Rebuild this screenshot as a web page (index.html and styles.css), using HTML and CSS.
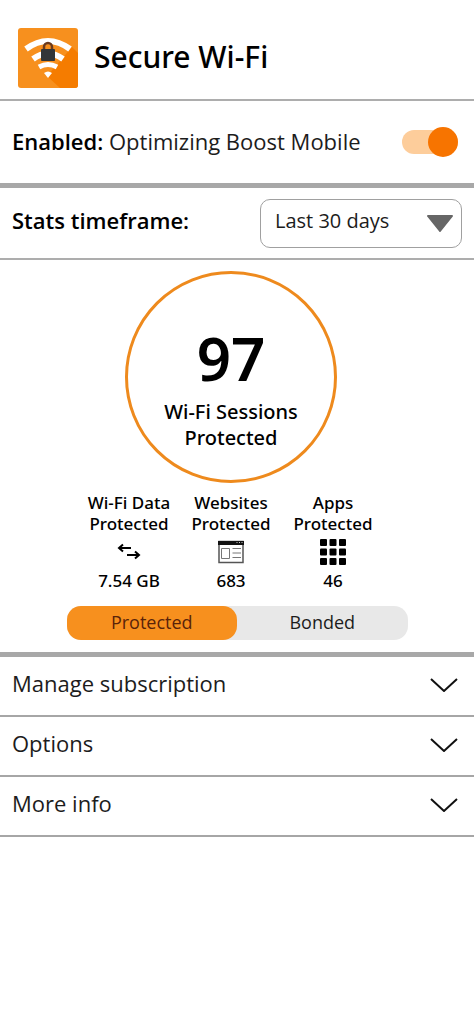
FILE: index.html
```html
<!DOCTYPE html>
<html lang="en">
<head>
<meta charset="utf-8">
<meta name="viewport" content="width=device-width, initial-scale=1">
<title>Secure Wi-Fi</title>
<link rel="stylesheet" href="styles.css">
</head>
<body>
<header class="header">
  <svg class="logo" viewBox="0 0 60 60" aria-hidden="true">
    <rect width="60" height="60" rx="3" fill="#f7901e"/>
    <path d="M54 19 60 25V57a3 3 0 0 1-3 3H42L29 48Z" fill="#f57c00"/>
    <g fill="none" stroke="#fff">
      <path d="M8 21Q30 5 52 21" stroke-width="6"/>
      <path d="M15 31Q30 20 45 31" stroke-width="6"/>
      <path d="M21 39Q30 34 39 39" stroke-width="5"/>
    </g>
    <path d="M26 45Q30 42 34 45L30 50Z" fill="#fff"/>
    <path d="M26 23V19a4 4 0 0 1 8 0V23" fill="none" stroke="#6b3a1c" stroke-width="2.500"/>
    <rect x="23" y="21" width="14" height="12" rx="1" fill="#333638"/>
  </svg>
  <h1 class="title">Secure Wi-Fi</h1>
</header>
<main>
  <section class="row row-enabled">
    <label for="enabled"><strong class="strong">Enabled:</strong> Optimizing Boost Mobile</label>
    <input class="toggle" type="checkbox" role="switch" id="enabled" checked>
  </section>
  <section class="row row-timeframe">
    <label class="strong" for="timeframe">Stats timeframe:</label>
    <span class="select-box">
      <select class="select" id="timeframe"><option>Last 30 days</option></select>
      <svg class="caret" viewBox="0 0 26 17" aria-hidden="true"><path d="M1 1H25L13 16Z" fill="#666" stroke="#666" stroke-width="2" stroke-linejoin="round"/></svg>
    </span>
  </section>
  <section class="stats">
    <div class="ring">
      <span class="ring-value">97</span>
      <span class="ring-label">Wi-Fi Sessions<br>Protected</span>
    </div>
    <div class="metrics">
      <div class="metric">
        <span>Wi-Fi Data<br>Protected</span>
        <svg class="metric-icon" viewBox="0 0 26 26" aria-hidden="true"><g fill="none" stroke="#000" stroke-width="2"><path d="M3 9H15M7 5.500 3 9 7 12.500M11 16H23M19 12.500 23 16 19 19.500"/></g></svg>
        <span>7.54 GB</span>
      </div>
      <div class="metric">
        <span>Websites<br>Protected</span>
        <svg class="metric-icon" viewBox="0 0 26 26" aria-hidden="true"><path d="M1 2.500H25V23.500H1Z" fill="#fff" stroke="#555" stroke-width="1.500"/><path d="M0 2H26V6H0Z" fill="#111"/><path d="M18.500 3.500h1M21 3.500h1M23.500 3.500h1" stroke="#ccc"/><path d="M3.500 9.500H11.500V19.500H3.500ZM14.500 9.500H23M14.500 14H23M14.500 18.500H23" fill="none" stroke="#777"/></svg>
        <span>683</span>
      </div>
      <div class="metric">
        <span>Apps<br>Protected</span>
        <svg class="metric-icon" viewBox="0 0 26 26" aria-hidden="true"><g fill="#000"><rect x="0" y="0" width="7" height="7" rx="1"/><rect x="9.500" y="0" width="7" height="7" rx="1"/><rect x="19" y="0" width="7" height="7" rx="1"/><rect x="0" y="9.500" width="7" height="7" rx="1"/><rect x="9.500" y="9.500" width="7" height="7" rx="1"/><rect x="19" y="9.500" width="7" height="7" rx="1"/><rect x="0" y="19" width="7" height="7" rx="1"/><rect x="9.500" y="19" width="7" height="7" rx="1"/><rect x="19" y="19" width="7" height="7" rx="1"/></g></svg>
        <span>46</span>
      </div>
    </div>
    <div class="segments">
      <button class="segment segment-active" type="button">Protected</button>
      <button class="segment" type="button">Bonded</button>
    </div>
  </section>
  <nav>
    <button class="item" type="button">Manage subscription<svg class="chevron" viewBox="0 0 28 14" aria-hidden="true"><path d="M1 1 14 13 27 1"/></svg></button>
    <button class="item" type="button">Options<svg class="chevron" viewBox="0 0 28 14" aria-hidden="true"><path d="M1 1 14 13 27 1"/></svg></button>
    <button class="item" type="button">More info<svg class="chevron" viewBox="0 0 28 14" aria-hidden="true"><path d="M1 1 14 13 27 1"/></svg></button>
  </nav>
</main>
</body>
</html>
```
FILE: styles.css
```css
* { box-sizing: border-box; }
body {
  margin: 0;
  background: #fff;
  color: #1c1c1c;
  font-family: "Open Sans", "Noto Sans", sans-serif;
  font-size: 22px;
  line-height: 28px;
}
button, select { font: inherit; color: inherit; border: 0; background: none; }
.header {
  display: flex;
  align-items: center;
  gap: 16px;
  padding: 28px 18px 11px;
  border-bottom: 2px solid #adadad;
}
.logo { width: 60px; height: 60px; }
.title { margin: 0; padding-bottom: 2px; font-family: "Noto Sans", sans-serif; font-size: 30px; line-height: 40px; font-weight: 500; color: #000; }
.row { display: flex; align-items: center; justify-content: space-between; padding: 0 12px; }
.row-enabled { min-height: 87px; padding-right: 16px; border-bottom: 5px solid #a8a8a8; }
.row-enabled label { padding-bottom: 2px; }
.row-timeframe { min-height: 72px; border-bottom: 2px solid #adadad; }
.row-timeframe label { padding-bottom: 6px; }
.strong { font-weight: 600; color: #000; }
.toggle {
  appearance: none;
  display: flex;
  align-items: center;
  justify-content: flex-end;
  width: 56px;
  height: 24px;
  margin: 0;
  border-radius: 12px;
  background: #fdcd9b;
}
.toggle::before { content: ""; width: 30px; height: 30px; border-radius: 50%; background: #f77400; flex: none; }
.select-box { display: grid; align-items: center; width: 202px; }
.select {
  grid-area: 1 / 1;
  appearance: none;
  width: 100%;
  height: 49px;
  padding: 0 40px 4px 14px;
  border: 1px solid #a0a0a0;
  border-radius: 10px;
  font-size: 20px;
}
.caret { grid-area: 1 / 1; justify-self: end; width: 26px; height: 17px; margin-right: 9px; pointer-events: none; }
.stats {
  display: flex;
  flex-direction: column;
  align-items: center;
  padding: 11px 12px 12px 0;
  border-bottom: 5px solid #a8a8a8;
  color: #000;
  font-family: "Noto Sans", sans-serif;
  font-weight: 500;
}
.ring {
  display: flex;
  flex-direction: column;
  align-items: center;
  width: 212px;
  height: 212px;
  padding-top: 43px;
  border: 3px solid #ee8a1d;
  border-radius: 50%;
  text-align: center;
}
.ring-value { font-size: 60px; line-height: 82px; font-weight: 600; }
.ring-label { font-size: 20px; line-height: 26px; }
.metrics { display: grid; grid-template-columns: repeat(3, 102px); padding-top: 9px; font-size: 17px; line-height: 21px; text-align: center; }
.metric { display: flex; flex-direction: column; align-items: center; gap: 5px; }
.metric-icon { width: 26px; height: 26px; }
.segments { display: flex; width: 341px; margin: 15px 0 0 12px; border-radius: 14px; background: #e8e8e8; font-family: "Open Sans", "Noto Sans", sans-serif; font-size: 18px; line-height: 24px; font-weight: 400; color: #1c1c1c; }
.segment { flex: 1; padding: 4px 14px 6px; border-radius: 14px; }
.segment-active { background: #f7901e; color: #59230a; }
.item {
  display: flex;
  align-items: center;
  justify-content: space-between;
  width: 100%;
  min-height: 60px;
  padding: 0 16px 6px 12px;
  border-bottom: 2px solid #a6a6a6;
  text-align: left;
}
.chevron { width: 28px; height: 14px; margin-top: 4px; fill: none; stroke: #111; stroke-width: 2; }
```
